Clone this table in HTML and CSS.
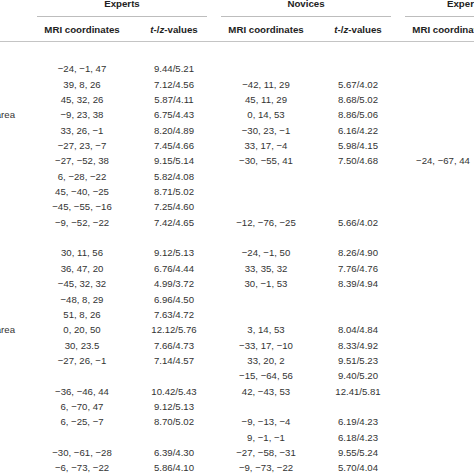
FILE: index.html
```html
<!DOCTYPE html>
<html>
<head>
<meta charset="utf-8">
<link rel="stylesheet" href="styles.css">
</head>
<body>
<div class="tbl">
  <div class="hrow grp-row">
    <span></span>
    <span class="grp">Experts</span>
    <span class="grp">Novices</span>
    <span class="grp grp-left">Experts</span>
  </div>
  <div class="hrow col-row">
    <span></span>
    <span>MRI coordinates</span>
    <span><i>t</i>-/<i>z</i>-values</span>
    <span>MRI coordinates</span>
    <span><i>t</i>-/<i>z</i>-values</span>
    <span>MRI coordinates</span>
    <span><i>t</i>-/<i>z</i>-values</span>
  </div>
  <div class="body">
    <div class="row"><span class="lbl"></span><span></span><span></span><span></span><span></span><span></span></div>
    <div class="row"><span class="lbl"></span><span>−24, −1, 47</span><span>9.44/5.21</span><span></span><span></span><span></span></div>
    <div class="row"><span class="lbl"></span><span>39, 8, 26</span><span>7.12/4.56</span><span>−42, 11, 29</span><span>5.67/4.02</span><span></span></div>
    <div class="row"><span class="lbl"></span><span>45, 32, 26</span><span>5.87/4.11</span><span>45, 11, 29</span><span>8.68/5.02</span><span></span></div>
    <div class="row"><span class="lbl">Supplementary motor area</span><span>−9, 23, 38</span><span>6.75/4.43</span><span>0, 14, 53</span><span>8.86/5.06</span><span></span></div>
    <div class="row"><span class="lbl"></span><span>33, 26, −1</span><span>8.20/4.89</span><span>−30, 23, −1</span><span>6.16/4.22</span><span></span></div>
    <div class="row"><span class="lbl"></span><span>−27, 23, −7</span><span>7.45/4.66</span><span>33, 17, −4</span><span>5.98/4.15</span><span></span></div>
    <div class="row"><span class="lbl"></span><span>−27, −52, 38</span><span>9.15/5.14</span><span>−30, −55, 41</span><span>7.50/4.68</span><span class="e2">−24, −67, 44</span></div>
    <div class="row"><span class="lbl"></span><span>6, −28, −22</span><span>5.82/4.08</span><span></span><span></span><span></span></div>
    <div class="row"><span class="lbl"></span><span>45, −40, −25</span><span>8.71/5.02</span><span></span><span></span><span></span></div>
    <div class="row"><span class="lbl"></span><span>−45, −55, −16</span><span>7.25/4.60</span><span></span><span></span><span></span></div>
    <div class="row"><span class="lbl"></span><span>−9, −52, −22</span><span>7.42/4.65</span><span>−12, −76, −25</span><span>5.66/4.02</span><span></span></div>
    <div class="row"><span class="lbl"></span><span></span><span></span><span></span><span></span><span></span></div>
    <div class="row"><span class="lbl"></span><span>30, 11, 56</span><span>9.12/5.13</span><span>−24, −1, 50</span><span>8.26/4.90</span><span></span></div>
    <div class="row"><span class="lbl"></span><span>36, 47, 20</span><span>6.76/4.44</span><span>33, 35, 32</span><span>7.76/4.76</span><span></span></div>
    <div class="row"><span class="lbl"></span><span>−45, 32, 32</span><span>4.99/3.72</span><span>30, −1, 53</span><span>8.39/4.94</span><span></span></div>
    <div class="row"><span class="lbl"></span><span>−48, 8, 29</span><span>6.96/4.50</span><span></span><span></span><span></span></div>
    <div class="row"><span class="lbl"></span><span>51, 8, 26</span><span>7.63/4.72</span><span></span><span></span><span></span></div>
    <div class="row"><span class="lbl">Supplementary motor area</span><span>0, 20, 50</span><span>12.12/5.76</span><span>3, 14, 53</span><span>8.04/4.84</span><span></span></div>
    <div class="row"><span class="lbl"></span><span>30, 23.5</span><span>7.66/4.73</span><span>−33, 17, −10</span><span>8.33/4.92</span><span></span></div>
    <div class="row"><span class="lbl"></span><span>−27, 26, −1</span><span>7.14/4.57</span><span>33, 20, 2</span><span>9.51/5.23</span><span></span></div>
    <div class="row"><span class="lbl"></span><span></span><span></span><span>−15, −64, 56</span><span>9.40/5.20</span><span></span></div>
    <div class="row"><span class="lbl"></span><span>−36, −46, 44</span><span>10.42/5.43</span><span>42, −43, 53</span><span>12.41/5.81</span><span></span></div>
    <div class="row"><span class="lbl"></span><span>6, −70, 47</span><span>9.12/5.13</span><span></span><span></span><span></span></div>
    <div class="row"><span class="lbl"></span><span>6, −25, −7</span><span>8.70/5.02</span><span>−9, −13, −4</span><span>6.19/4.23</span><span></span></div>
    <div class="row"><span class="lbl"></span><span></span><span></span><span>9, −1, −1</span><span>6.18/4.23</span><span></span></div>
    <div class="row"><span class="lbl"></span><span>−30, −61, −28</span><span>6.39/4.30</span><span>−27, −58, −31</span><span>9.55/5.24</span><span></span></div>
    <div class="row"><span class="lbl"></span><span>−6, −73, −22</span><span>5.86/4.10</span><span>−9, −73, −22</span><span>5.70/4.04</span><span></span></div>
  </div>
</div>
</body>
</html>
```
FILE: styles.css
```css
html, body {
  margin: 0;
  padding: 0;
  overflow: hidden;
  background: #ffffff;
}
body {
  font-family: "Liberation Sans", Arial, sans-serif;
  color: #333333;
}
.tbl {
  width: 588px;
  margin-top: -10px;
}
.hrow {
  display: grid;
  grid-template-columns: 36px repeat(6, 92px);
  font-weight: bold;
  font-size: 9.7px;
  color: #222222;
}
.grp-row {
  height: 27px;
}
.grp {
  grid-column: span 2;
  display: flex;
  align-items: center;
  justify-content: center;
  margin: 0 13px 0 1px;
  border-bottom: 1px solid #bdbdbd;
  box-sizing: border-box;
}
.grp-left {
  justify-content: flex-start;
  padding-left: 42px;
}
.col-row {
  height: 25px;
}
.col-row span {
  display: flex;
  align-items: center;
  justify-content: center;
  border-bottom: 1px solid #c4c4c4;
  box-sizing: border-box;
  white-space: nowrap;
}
.body {
  padding-top: 4px;
}
.row {
  display: grid;
  grid-template-columns: 36px repeat(5, 92px);
  height: 15.35px;
  line-height: 15.35px;
  font-size: 9.6px;
}
.row span {
  text-align: center;
  white-space: nowrap;
}
.row .lbl {
  display: flex;
  justify-content: flex-end;
  padding-right: 21px;
}
.row .e2 {
  padding-right: 14px;
}
```
